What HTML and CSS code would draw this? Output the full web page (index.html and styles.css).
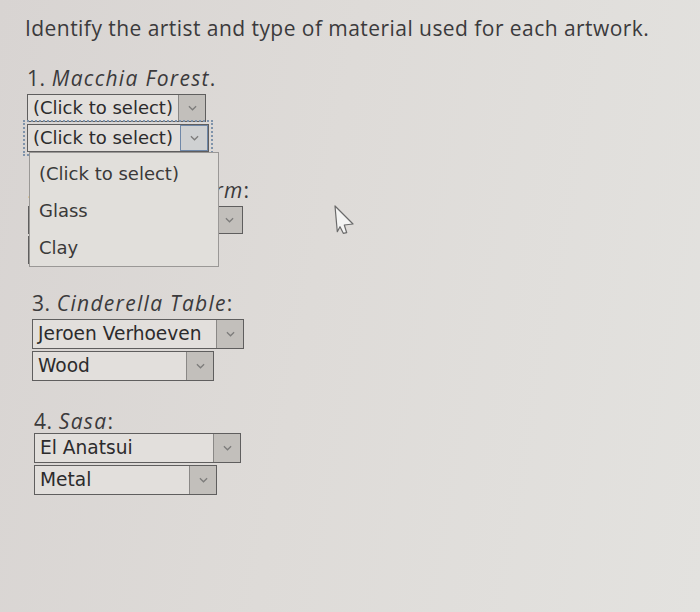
FILE: index.html
```html
<!DOCTYPE html>
<html lang="en">
<head>
  <meta charset="UTF-8">
  <title>Artwork Materials</title>
  <link rel="stylesheet" href="styles.css">
</head>
<body>

  <div class="page">
    <h1 class="prompt">Identify the artist and type of material used for each artwork.</h1>

    <div class="item item-1">
      <p class="item-title">1. <em>Macchia Forest</em>.</p>
      <div class="select w-179">
        <span class="select-value">(Click to select)</span>
        <span class="select-arrow"><svg viewBox="0 0 10 6"><path d="M1 1l4 4 4-4"/></svg></span>
      </div>
      <div class="select w-182 is-open">
        <span class="select-value">(Click to select)</span>
        <span class="select-arrow"><svg viewBox="0 0 10 6"><path d="M1 1l4 4 4-4"/></svg></span>
        <ul class="select-menu">
          <li>(Click to select)</li>
          <li>Glass</li>
          <li>Clay</li>
        </ul>
      </div>
    </div>

    <!-- mostly hidden behind the open list -->
    <div class="item item-2">
      <p class="item-title">2. <em>Persian Wall Form</em>:</p>
      <div class="select w-215">
        <span class="select-value"></span>
        <span class="select-arrow"><svg viewBox="0 0 10 6"><path d="M1 1l4 4 4-4"/></svg></span>
      </div>
      <div class="select w-182">
        <span class="select-value"></span>
        <span class="select-arrow"><svg viewBox="0 0 10 6"><path d="M1 1l4 4 4-4"/></svg></span>
      </div>
      <!-- mouse pointer -->
      <svg class="cursor" viewBox="-2 -2 22 32"><path d="M0 0L2.3 25.7 5 20.7 8.3 27.3 11.7 26.7 9.3 19 18 18Z"/></svg>
    </div>

    <div class="item item-3">
      <p class="item-title">3. <em>Cinderella Table</em>:</p>
      <div class="select w-212">
        <span class="select-value">Jeroen Verhoeven</span>
        <span class="select-arrow"><svg viewBox="0 0 10 6"><path d="M1 1l4 4 4-4"/></svg></span>
      </div>
      <div class="select w-182">
        <span class="select-value">Wood</span>
        <span class="select-arrow"><svg viewBox="0 0 10 6"><path d="M1 1l4 4 4-4"/></svg></span>
      </div>
    </div>

    <div class="item item-4">
      <p class="item-title">4. <em>Sasa</em>:</p>
      <div class="select w-207">
        <span class="select-value">El Anatsui</span>
        <span class="select-arrow"><svg viewBox="0 0 10 6"><path d="M1 1l4 4 4-4"/></svg></span>
      </div>
      <div class="select w-183">
        <span class="select-value">Metal</span>
        <span class="select-arrow"><svg viewBox="0 0 10 6"><path d="M1 1l4 4 4-4"/></svg></span>
      </div>
    </div>
  </div>

</body>
</html>
```

FILE: styles.css
```css
html, body {
  height: 100%;
}

body {
  margin: 0;
  font-family: 'Open Sans', sans-serif;
  color: #3b3a3c;
  background: linear-gradient(100deg, #d8d4d2 0%, #dedbd8 45%, #e3e2df 100%);
}

.page {
  padding: 13px 0 0 25px;
  position: relative;
}

.prompt {
  margin: 0 0 23px;
  font-size: 21px;
  font-weight: normal;
  line-height: 30px;
  letter-spacing: 0.45px;
}

.item {
  margin-bottom: 26px;
}

.item-title {
  margin: 0 0 4px;
  font-size: 21px;
  line-height: 24px;
  letter-spacing: 0.6px;
}

.item-title em {
  font-style: italic;
  letter-spacing: 1.3px;
}

/* the photo is a little skewed, lower rows sit further right and larger */
.item-1 { padding-left: 2px; }
.item-2 { padding-left: 3px; margin-bottom: 27px; }
.item-3 { padding-left: 7px; margin-bottom: 28px; }
.item-4 { padding-left: 9px; }

.item-4 .item-title {
  margin-bottom: 0;
}

.item-3 .select,
.item-4 .select {
  height: 30px;
  font-size: 18.6px;
}

.item-3 .select-value,
.item-4 .select-value {
  line-height: 28px;
}

/* fake select boxes */
.select {
  position: relative;
  display: flex;
  height: 28px;
  margin-bottom: 2px;
  border: 1px solid #5f5e5e;
  background: #e2dfdc;
  font-family: 'DejaVu Sans', sans-serif;
  font-size: 18px;
  color: #2c2b2c;
  box-sizing: border-box;
}

.select-value {
  flex: 1;
  padding: 0 5px;
  line-height: 26px;
  white-space: nowrap;
  overflow: hidden;
}

.select-arrow {
  width: 26px;
  display: flex;
  align-items: center;
  justify-content: center;
  background: #c2bfbb;
  border-left: 1px solid #8a8886;
}

.select-arrow svg {
  width: 9px;
  height: 6px;
  fill: none;
  stroke: #7d7c7b;
  stroke-width: 1.4;
}

.w-179 { width: 179px; }
.w-182 { width: 182px; }
.w-183 { width: 183px; }
.w-207 { width: 207px; }
.w-212 { width: 212px; }
.w-215 { width: 215px; }

.is-open {
  outline: 2px dotted #7f93aa;
  outline-offset: 2px;
}

.is-open .select-arrow {
  border: 1px solid #6f88a8;
  background: #cfd1d2;
}

.select-menu {
  position: absolute;
  z-index: 2;
  top: 27px;
  left: 1px;
  width: 190px;
  margin: 0;
  padding: 2px 0 0;
  list-style: none;
  background: #e1dfdb;
  border: 1px solid #9a9896;
  box-sizing: border-box;
}

.select-menu li {
  padding: 0 9px;
  height: 37px;
  line-height: 37px;
  color: #3a3939;
}

.cursor {
  position: absolute;
  left: 333px;
  top: 204px;
  width: 22px;
  height: 32px;
  fill: #f4f4f3;
  stroke: #6a6a6a;
  stroke-width: 1.2;
  stroke-linejoin: round;
}
```
